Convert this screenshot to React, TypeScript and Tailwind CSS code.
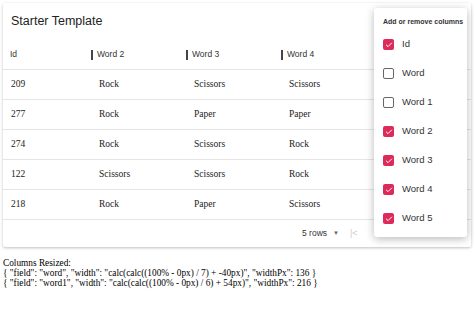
import { Check } from 'lucide-react';

const rows = [
  ['209', 'Rock', 'Scissors', 'Scissors'],
  ['277', 'Rock', 'Paper', 'Paper'],
  ['274', 'Rock', 'Scissors', 'Rock'],
  ['122', 'Scissors', 'Scissors', 'Rock'],
  ['218', 'Rock', 'Paper', 'Scissors'],
];

const columns = [
  { label: 'Id', on: true },
  { label: 'Word', on: false },
  { label: 'Word 1', on: false },
  { label: 'Word 2', on: true },
  { label: 'Word 3', on: true },
  { label: 'Word 4', on: true },
  { label: 'Word 5', on: true },
];

const sans = { fontFamily: '"Liberation Sans", Arial, sans-serif' };

export default function App() {
  return (
    <div className="w-[474px] h-[312px] bg-white overflow-hidden relative">
      {/* tabla */}
      <div className="mx-[3px] mt-[3px] h-[244px] bg-white shadow-[0_1px_3px_rgba(0,0,0,0.25)] rounded-[2px] flex flex-col">
        <div className="h-[37px] flex items-center pl-[8px] text-[12.5px] text-[#222]" style={sans}>
          Starter Template
        </div>
        <div className="h-[30px] flex items-center border-b border-[#e5e5e5] text-[8.5px] text-[#333]" style={sans}>
          <div className="w-[88px] pl-[7px]">Id</div>
          {['Word 2', 'Word 3', 'Word 4'].map((h) => (
            <div key={h} className="w-[95px] flex items-center gap-[4px]">
              <span className="w-[2px] h-[10px] bg-[#444]" />
              {h}
            </div>
          ))}
        </div>
        {rows.map((r) => (
          <div
            key={r[0]}
            className="h-[30px] flex items-center border-b border-[#e5e5e5] text-[9.5px] text-[#222]"
            style={{ fontFamily: '"Liberation Serif", "Times New Roman", serif' }}
          >
            <div className="w-[88px] pl-[8px]">{r[0]}</div>
            <div className="w-[95px] pl-[8px]">{r[1]}</div>
            <div className="w-[95px] pl-[8px]">{r[2]}</div>
            <div className="w-[95px] pl-[8px]">{r[3]}</div>
          </div>
        ))}
        <div className="flex-1 flex items-center pl-[299px] gap-[6px] text-[8.5px] text-[#333]" style={sans}>
          <span>5 rows</span>
          <span className="text-[6px] text-[#666]">▼</span>
          <span className="ml-[5px] text-[#ccc] text-[9px]">|&lt;</span>
        </div>
      </div>

      <div
        className="mt-[12px] ml-[3px] text-[9.3px] leading-[9.8px] text-black"
        style={{ fontFamily: '"Liberation Serif", "Times New Roman", serif' }}
      >
        <div>Columns Resized:</div>
        <div>{'{ "field": "word", "width": "calc(calc((100% - 0px) / 7) + -40px)", "widthPx": 136 }'}</div>
        <div>{'{ "field": "word1", "width": "calc(calc((100% - 0px) / 6) + 54px)", "widthPx": 216 }'}</div>
      </div>

      {/* menú de columnas */}
      <div
        className="absolute left-[374px] top-[8px] w-[93px] h-[229px] bg-white rounded-[3px] shadow-[0_2px_8px_rgba(0,0,0,0.28)] pl-[9px] pt-[8px]"
        style={sans}
      >
        <div className="text-[7px] font-bold text-[#333] h-[11px] leading-[11px]">Add or remove columns</div>
        <div className="flex flex-col mt-[3px]">
          {columns.map((c) => (
            <div key={c.label} className="h-[29px] flex items-center gap-[8px] text-[9.5px] text-[#333]">
              {c.on ? (
                <span className="w-[11px] h-[11px] rounded-[2px] bg-[#de2a5b] flex items-center justify-center">
                  <Check size={8} strokeWidth={3} color="white" />
                </span>
              ) : (
                <span className="w-[11px] h-[11px] rounded-[2px] border-[1.5px] border-[#666]" />
              )}
              {c.label}
            </div>
          ))}
        </div>
      </div>
    </div>
  );
}
